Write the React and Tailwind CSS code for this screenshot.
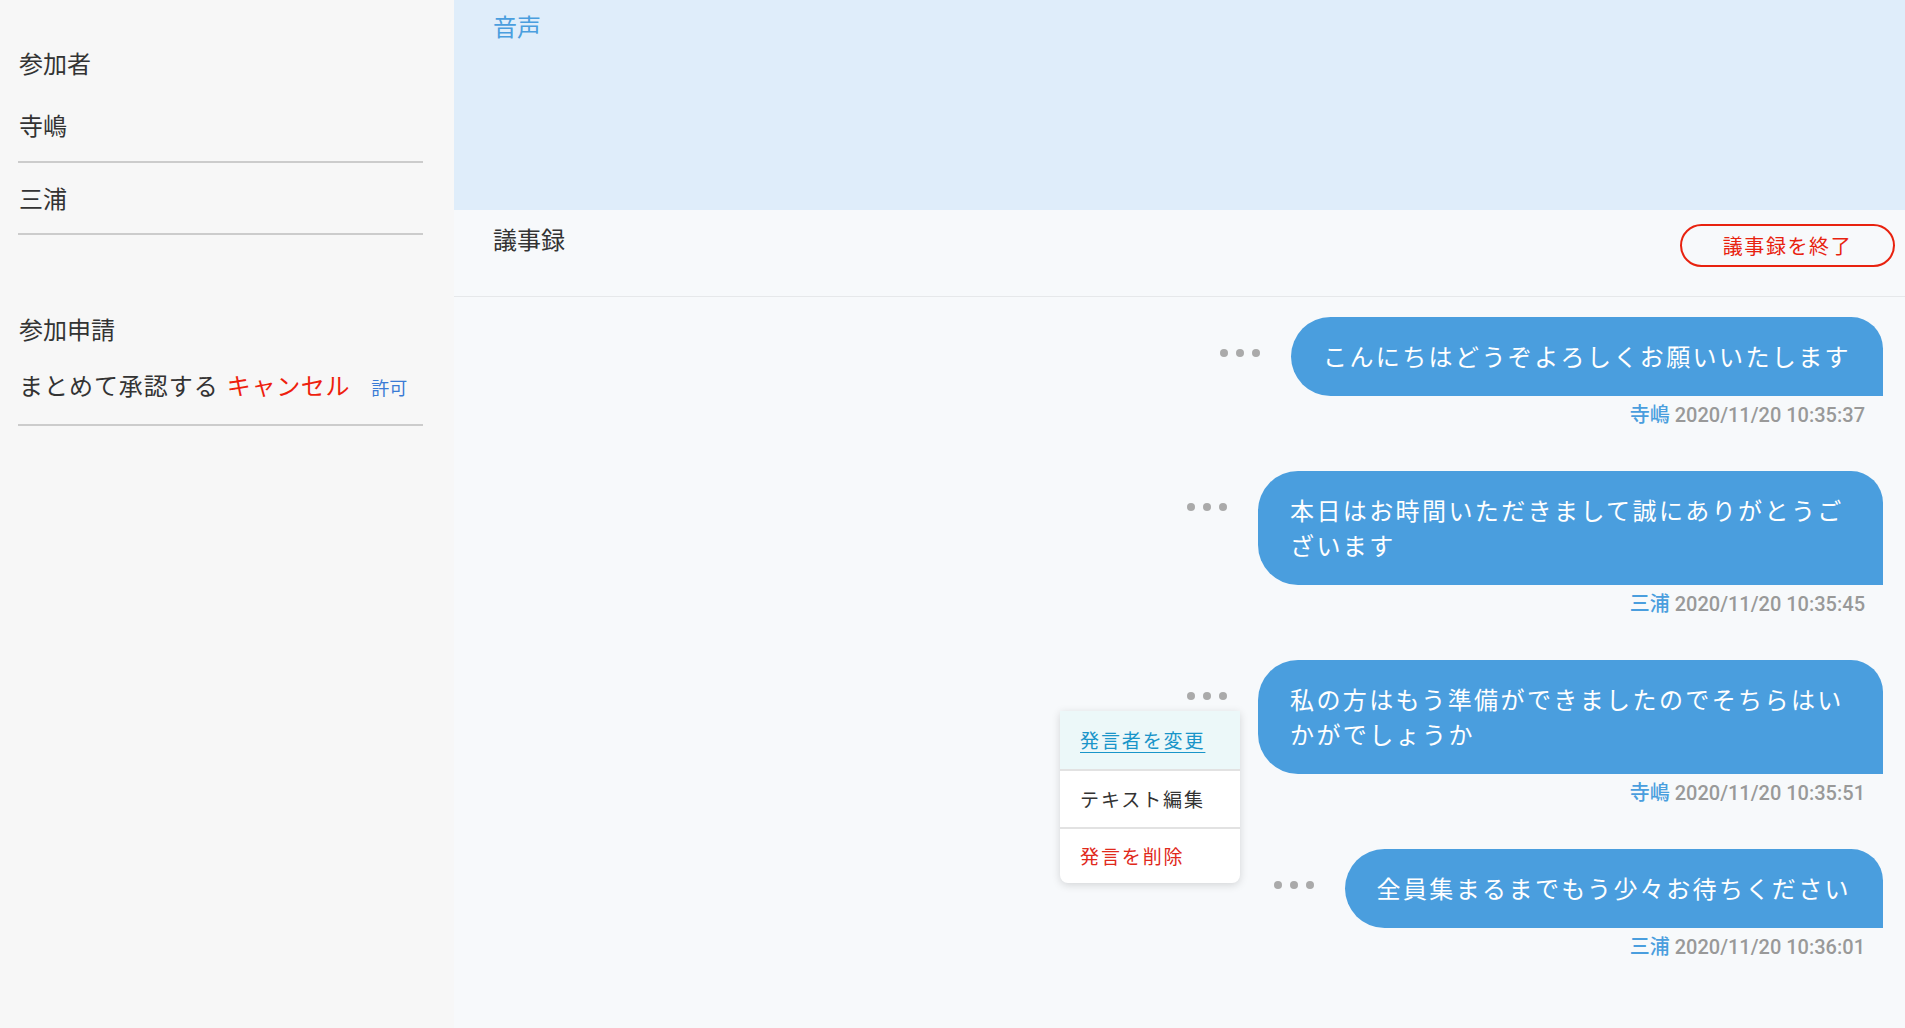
const FONT = { fontFamily: '"Noto Sans CJK JP", "Noto Sans", sans-serif' };
const META_FONT = { fontFamily: 'Roboto, "Noto Sans CJK JP", sans-serif' };

const messages = [
  { id: 1, text: "こんにちはどうぞよろしくお願いいたします", name: "寺嶋", time: "2020/11/20 10:35:37" },
  { id: 2, text: "本日はお時間いただきまして誠にありがとうございます", name: "三浦", time: "2020/11/20 10:35:45" },
  { id: 3, text: "私の方はもう準備ができましたのでそちらはいかがでしょうか", name: "寺嶋", time: "2020/11/20 10:35:51", menu: true },
  { id: 4, text: "全員集まるまでもう少々お待ちください", name: "三浦", time: "2020/11/20 10:36:01" },
];

const Dots = ({ menu }) => (
  <div className="relative mt-[32px] flex gap-[8px]">
    <span className="h-[8px] w-[8px] rounded-full bg-[#aaaaaa]" />
    <span className="h-[8px] w-[8px] rounded-full bg-[#aaaaaa]" />
    <span className="h-[8px] w-[8px] rounded-full bg-[#aaaaaa]" />
    {menu && (
      <div className="absolute right-[-13px] top-[19px] z-10 w-[180px] overflow-hidden rounded-b-lg bg-white shadow-[0_2px_8px_rgba(0,0,0,0.15)]">
        <div className="flex h-[58px] items-center bg-[#ecf8f9] pl-[20px] text-[19px] tracking-[0.1em] text-[#1995c9] underline underline-offset-4">
          発言者を変更
        </div>
        <div className="flex h-[58px] items-center border-t-2 border-[#e2e2e2] pl-[20px] text-[19px] tracking-[0.1em] text-[#333333]">
          テキスト編集
        </div>
        <div className="flex h-[56px] items-center border-t-2 border-[#e2e2e2] pl-[20px] text-[19px] tracking-[0.1em] text-[#e0291b]">
          発言を削除
        </div>
      </div>
    )}
  </div>
);

const Message = ({ m }) => (
  <div className="mb-[45px] flex flex-col items-end">
    <div className="flex items-start gap-[31px]">
      <Dots menu={m.menu} />
      <div className="max-w-[625px] rounded-l-[40px] rounded-tr-[32px] bg-[#4a9ede] px-8 pb-[23px] pt-[21px] text-2xl leading-[35px] tracking-[0.1em] text-white">
        {m.text}
      </div>
    </div>
    <div className="mr-[18px] mt-2 text-[20px] font-medium leading-[22px]" style={META_FONT}>
      <span className="text-[#4a9ede]">{m.name}</span>{" "}
      <span className="text-[#999999]">{m.time}</span>
    </div>
  </div>
);

export default function App() {
  return (
    <div className="flex h-[1028px] w-full overflow-hidden text-[#333333]" style={FONT}>
      {/* SIDEBAR */}
      <aside className="w-[454px] shrink-0 bg-[#f7f7f7] pl-[18px] pr-[31px]">
        <h2 className="mt-[45px] pl-[1px] text-2xl leading-[36px]">参加者</h2>
        <div className="mt-[9px] border-b-2 border-[#cccccc] pb-[19px] pt-[17px] pl-[1px] text-2xl leading-[35px]">寺嶋</div>
        <div className="border-b-2 border-[#cccccc] pb-[18px] pt-[17px] pl-[1px] text-2xl leading-[35px]">三浦</div>

        <h2 className="mt-[76px] pl-[1px] text-2xl leading-[36px]">参加申請</h2>
        <div className="mt-[3px] flex items-center border-b-2 border-[#cccccc] pb-[21px] pl-[1px] pt-[17px] text-2xl leading-[36px]">
          <span className="tracking-[0.04em]">まとめて承認する</span>
          <span className="ml-[8px] tracking-[0.03em] text-[#ee1f0e]">キャンセル</span>
          <span className="ml-[21px] mt-[4px] text-lg text-[#3a7bd5]">許可</span>
        </div>
      </aside>

      {/* MAIN */}
      <main className="flex flex-1 flex-col bg-[#f7f9fb]">
        <section className="h-[210px] shrink-0 bg-[#dfedfa] px-[39px] pt-[8px]">
          <div className="text-2xl leading-[36px] text-[#4a9ede]">音声</div>
        </section>

        <header className="flex h-[87px] shrink-0 items-start justify-between border-b border-[#e6e8ea] pl-[39px] pr-[10px]">
          <h1 className="mt-[11px] text-2xl leading-[36px]">議事録</h1>
          <button className="mt-[14px] flex h-[43px] w-[215px] items-center justify-center rounded-full border-2 border-[#e8220f] text-xl tracking-[0.08em] text-[#e8220f]">
            議事録を終了
          </button>
        </header>

        <div className="flex flex-col items-end pr-[22px] pt-[20px]">
          {messages.map((m) => (
            <Message key={m.id} m={m} />
          ))}
        </div>
      </main>
    </div>
  );
}
